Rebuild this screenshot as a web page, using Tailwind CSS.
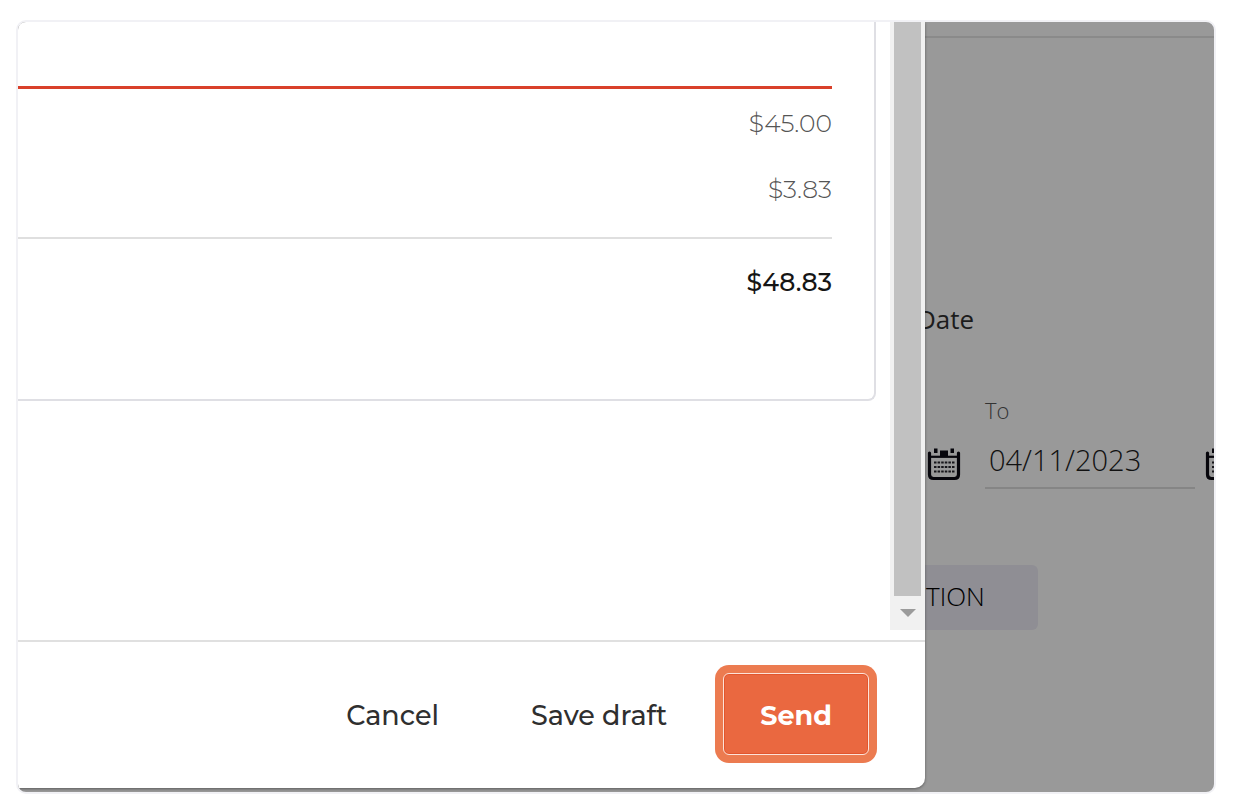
<!DOCTYPE html>
<html lang="en">
<head>
<meta charset="utf-8">
<meta name="viewport" content="width=device-width, initial-scale=1">
<title>Send invoice</title>
<script src="https://cdn.jsdelivr.net/npm/@tailwindcss/browser@4"></script>
</head>
<body class="min-h-screen bg-white pt-5 pr-[18px] pb-3 pl-4 font-[Montserrat,Inter,sans-serif]">
<svg class="hidden" aria-hidden="true">
  <symbol id="calendar" viewBox="0 0 34 34">
    <path d="M2.500 6V27.500Q2.500 31.500 6.500 31.500H27.500Q31.500 31.500 31.500 27.500V6" fill="none" stroke="#07060c" stroke-width="3.200" stroke-linecap="round"/>
    <path d="M2 9.800H32" stroke="#07060c" stroke-width="2.200"/>
    <path d="M5.500 1h6v7h-6zM22.500 1h6v7h-6z" fill="#999"/>
    <path d="M7 1.500h3.500v4.500H7zM23.500 1.500H27v4.500h-3.500zM13 3.500h8v6.500H13z" fill="#07060c"/>
    <path d="M7 15.500h20.500M7 20h20.500M7 24.500h20.500" stroke="#17161b" stroke-width="2.200" stroke-dasharray="2.500 1.100"/>
  </symbol>
</svg>
<div class="flex overflow-hidden rounded-[10px] border-2 border-[#f1f1f5] bg-[#999]">
  <section role="dialog" aria-label="Invoice" class="relative z-10 mb-1 flex min-w-0 flex-1 flex-col rounded-br-[10px] bg-white shadow-[0_1px_3px_rgba(0,0,0,0.4)]">
    <div class="flex h-[608px]">
      <div class="min-w-0 flex-1 pr-3.5">
        <div class="h-[379px] rounded-br-[8px] border-r-2 border-b-2 border-[#dfdfe4] pt-16 pr-[42px]">
          <div class="border-t-[3px] border-[#d9402a] text-right text-[25px] leading-8">
            <p class="pt-[18px] font-light text-[#555]">$45.00</p>
            <p class="mt-[34px] border-b-2 border-[#dfdfdf] pb-8 font-light text-[#555]">$3.83</p>
            <p class="pt-[27px] font-medium text-[#151515]">$48.83</p>
          </div>
        </div>
      </div>
      <div class="flex w-[35px] flex-col bg-[#f1f1f1] px-1" aria-hidden="true">
        <div class="flex-1 bg-[#c1c1c1]"></div>
        <div class="flex h-[34px] items-center justify-center">
          <svg class="h-2 w-4" viewBox="0 0 16 8"><path d="M0 0H16L8 8Z" fill="#9b9b9b"/></svg>
        </div>
      </div>
    </div>
    <footer class="mt-2.5 flex h-[148px] items-center justify-end border-t-2 border-[#e0e0e0] pr-12 pb-0.5 text-[27px] leading-8 text-[#2f2f2f]">
      <button type="button" class="mr-[92px] pt-1 font-medium">Cancel</button>
      <button type="button" class="mr-12 pt-1 font-medium">Save draft</button>
      <div class="rounded-[14px] bg-[#ec7b50] p-2">
        <button type="button" class="block rounded-md border border-[#fde3d9] bg-[#ea6840] px-9 pt-[26px] pb-[22px] font-bold text-white shadow-[inset_0_0_0_1px_#e2562d]">Send</button>
      </div>
    </footer>
  </section>
  <aside class="w-[289px] shrink-0 overflow-hidden pt-3.5 font-['Open_Sans',sans-serif]">
    <div class="border-t-2 border-[#8a8a8a]"></div>
    <h2 class="-ml-2 pt-[265px] text-[26px] leading-8 text-[#1c1c1c]">Date</h2>
    <label for="to" class="mt-[61px] ml-[60px] block text-[22px] leading-7 font-light text-[#333]">To</label>
    <div class="mt-[11px] flex items-start">
      <button type="button" aria-label="Open start calendar" class="mt-3 w-[60px] shrink-0"><svg class="ml-0.5 size-[34px]"><use href="#calendar"/></svg></button>
      <input id="to" type="text" value="04/11/2023" class="h-[54px] w-[210px] shrink-0 border-b-2 border-[#858585] px-1 pb-1 text-[29px] font-light text-[#111] outline-none">
      <button type="button" aria-label="Open end calendar" class="mt-3 ml-2.5 shrink-0"><svg class="size-[34px]"><use href="#calendar"/></svg></button>
    </div>
    <button type="button" class="mt-[76px] block h-[65px] w-[113px] rounded-r-md bg-[#8f8e94] pb-0.5 pl-px text-left text-[26px] font-light text-black">TION</button>
  </aside>
</div>
</body>
</html>
